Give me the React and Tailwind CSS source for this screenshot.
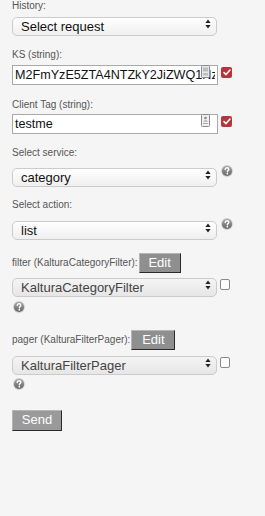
import React from 'react';

const font = { fontFamily: '"Liberation Sans", Arial, sans-serif' };

const Label = ({ children, className = '' }) => (
  <div className={`text-[10px] leading-[12px] text-[#555] ${className}`}>{children}</div>
);

const Arrows = () => (
  <svg className="pointer-events-none absolute right-[6px] top-1/2 -translate-y-1/2" width="6" height="10" viewBox="0 0 6 10">
    <path d="M3 0.5 L5.6 4 L0.4 4 Z" fill="#222" />
    <path d="M3 9.5 L5.6 6 L0.4 6 Z" fill="#222" />
  </svg>
);

const Select = ({ value, muted }) => (
  <div className="relative w-[205px] h-[19px]">
    <select
      defaultValue={value}
      className={`appearance-none w-full h-full rounded-[5px] border border-[#cbcbcb] pl-[8px] text-[13px] leading-[17px] outline-none bg-gradient-to-b ${
        muted ? 'from-[#f4f4f4] to-[#e6e6e6] text-[#444]' : 'from-white to-[#efefef] text-[#111]'
      }`}
      style={font}
    >
      <option>{value}</option>
    </select>
    <Arrows />
  </div>
);

const Help = ({ className = '' }) => (
  <svg className={className} width="12" height="12" viewBox="0 0 12 12">
    <defs>
      <linearGradient id="hg" x1="0" y1="0" x2="0" y2="1">
        <stop offset="0" stopColor="#a5a5a5" />
        <stop offset="1" stopColor="#666" />
      </linearGradient>
    </defs>
    <circle cx="6" cy="6" r="5.9" fill="#d2d2d2" />
    <circle cx="6" cy="6" r="5.1" fill="url(#hg)" />
    <path d="M4.2 4.6 C4.2 3.4 5.1 2.8 6 2.8 C7.1 2.8 7.8 3.5 7.8 4.4 C7.8 5.5 6.4 5.6 6.4 6.7" stroke="#fff" strokeWidth="1.4" fill="none" strokeLinecap="round" />
    <circle cx="6.3" cy="8.7" r="0.85" fill="#fff" />
  </svg>
);

const RedCheck = () => (
  <div className="w-[11px] h-[11px] rounded-[2px] bg-[#b6343c] flex items-center justify-center shrink-0">
    <svg width="8" height="7" viewBox="0 0 8 7">
      <path d="M1 3.6 L3 5.6 L7 1" stroke="#fff" strokeWidth="1.5" fill="none" strokeLinecap="round" strokeLinejoin="round" />
    </svg>
  </div>
);

const EmptyCheck = () => (
  <div className="w-[10px] h-[11px] rounded-[2px] border border-[#8a8a8a] bg-white shrink-0" />
);

const Btn = ({ children, className = '' }) => (
  <button
    className={`h-[20px] bg-[#8f8f8f] text-white text-[13px] leading-[18px] border-r border-b border-[#2a2a2a] border-t border-l border-t-[#b5b5b5] border-l-[#b5b5b5] ${className}`}
    style={font}
  >
    {children}
  </button>
);

const KeyIcon = () => (
  <svg className="absolute right-[8px] top-[3px] pointer-events-none" width="9" height="13" viewBox="0 0 9 13">
    <rect x="0.5" y="0.5" width="8" height="12" rx="1" fill="#e8e8e8" stroke="#8a8a8a" />
    <rect x="2" y="2.5" width="5" height="4" fill="#bdbdbd" />
    <rect x="2" y="8" width="5" height="2.5" fill="#bdbdbd" />
  </svg>
);

const CardIcon = () => (
  <svg className="absolute right-[8px] top-[3px] pointer-events-none" width="9" height="13" viewBox="0 0 9 13">
    <rect x="0.5" y="0.5" width="8" height="12" rx="1" fill="#f0f0f0" stroke="#8a8a8a" />
    <circle cx="4.5" cy="4" r="1.3" fill="#8a8a8a" />
    <path d="M2.3 7.5 C2.3 6 6.7 6 6.7 7.5 Z" fill="#8a8a8a" />
    <rect x="2" y="9" width="5" height="1" fill="#aaa" />
  </svg>
);

const TextInput = ({ value, icon }) => (
  <div className="relative w-[206px] h-[20px]">
    <input
      readOnly
      value={value}
      className="w-full h-full border border-[#a9a9a9] bg-white pl-[2px] pr-[2px] text-[12.6px] text-[#111] outline-none"
      style={font}
    />
    {icon}
  </div>
);

export default function App() {
  return (
    <div className="min-h-screen w-full bg-[#f5f5f5] pl-[12px]" style={font}>
      <Label className="pt-0">History:</Label>
      <div className="mt-[2px]">
        <Select value="Select request" />
      </div>

      <Label className="mt-[16px]">KS (string):</Label>
      <div className="mt-[1px] flex items-center gap-[3px]">
        <TextInput value="M2FmYzE5ZTA4NTZkY2JiZWQ1NzcxNGQ2ZjY5MjQ5ZDI0" icon={<KeyIcon />} />
        <RedCheck />
      </div>

      <Label className="mt-[17px]">Client Tag (string):</Label>
      <div className="mt-[0px] flex items-center gap-[3px]">
        <TextInput value="testme" icon={<CardIcon />} />
        <RedCheck />
      </div>

      <Label className="mt-[16px]">Select service:</Label>
      <div className="mt-[6px] flex items-start gap-[4px]">
        <Select value="category" />
        <Help />
      </div>

      <Label className="mt-[15px]">Select action:</Label>
      <div className="mt-[7px] flex items-start gap-[4px]">
        <Select value="list" />
        <Help />
      </div>

      <div className="mt-[16px] flex items-center">
        <Label>filter (KalturaCategoryFilter):</Label>
        <Btn className="ml-[1px] w-[42px]">Edit</Btn>
      </div>
      <div className="mt-[2px] flex items-center gap-[3px]">
        <Select value="KalturaCategoryFilter" muted />
        <EmptyCheck />
      </div>
      <Help className="mt-[7px] ml-[1px]" />

      <div className="mt-[17px] flex items-center">
        <Label>pager (KalturaFilterPager):</Label>
        <Btn className="ml-[1px] w-[44px]">Edit</Btn>
      </div>
      <div className="mt-[3px] flex items-center gap-[3px]">
        <Select value="KalturaFilterPager" muted />
        <EmptyCheck />
      </div>
      <Help className="mt-[6px] ml-[1px]" />

      <div className="mt-[17px]">
        <Btn className="w-[50px] h-[21px] bg-[#9a9a9a]">Send</Btn>
      </div>
    </div>
  );
}
